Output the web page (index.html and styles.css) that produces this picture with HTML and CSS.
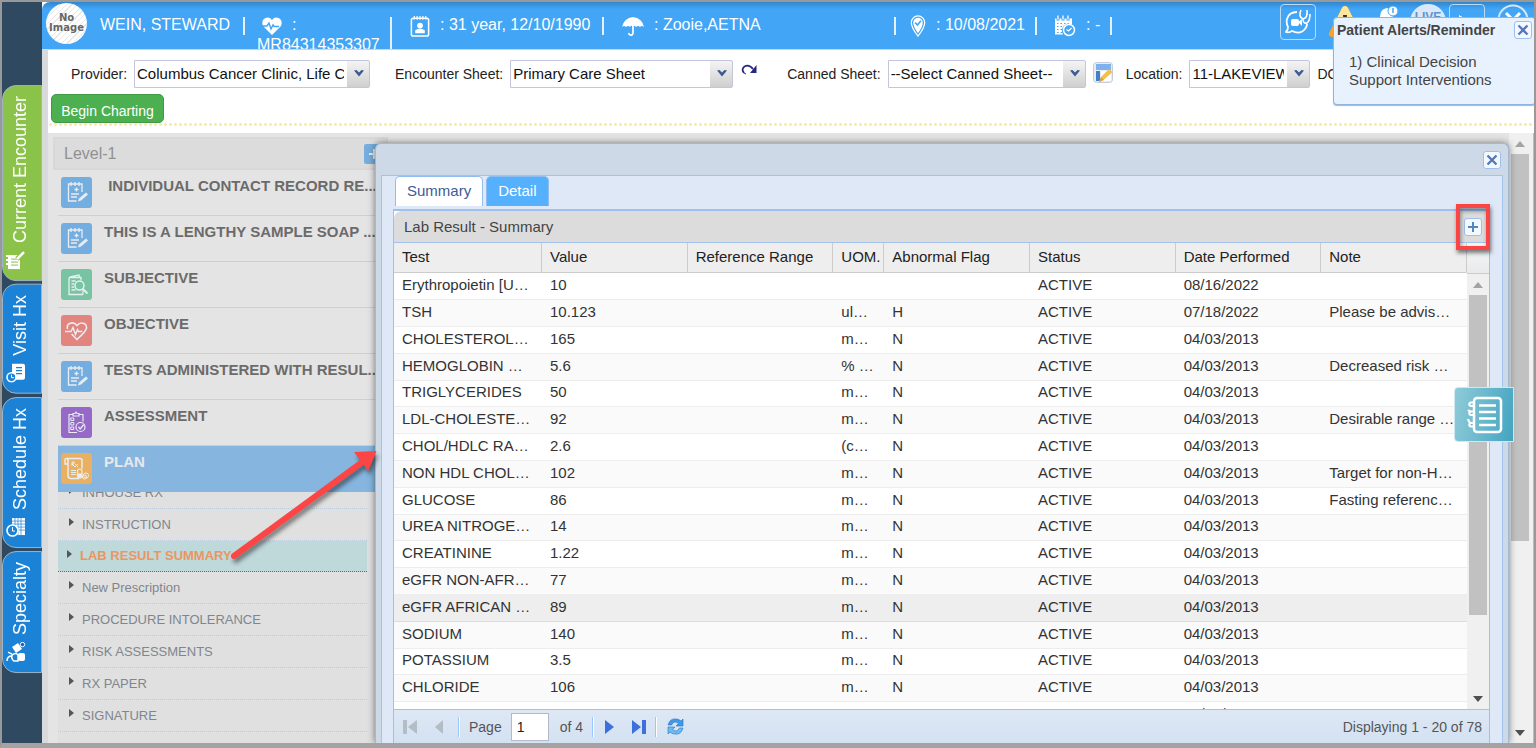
FILE: index.html
```html
<!DOCTYPE html>
<html lang="en">
<head>
<meta charset="utf-8">
<title>Lab Result Summary</title>
<link rel="stylesheet" href="styles.css">
</head>
<body>
<svg class="sprite" aria-hidden="true">
  <symbol id="i-note" viewBox="0 0 31 31">
    <path d="M10 7H7.500v17h8M18 7h3v8" fill="none" stroke="currentColor" stroke-width="1.300"/>
    <path d="M10 5v4M14 5v4M18 5v4M10 7h8M15.500 10.500v4M13.500 12.500h4M10 17h8M10 20h6" fill="none" stroke="currentColor" stroke-width="1.300"/>
    <path d="M17 24.500l1-3 7-6 2 2-7 6z" fill="currentColor"/>
  </symbol>
  <symbol id="i-search" viewBox="0 0 31 31">
    <path d="M8 8.500v17h14M8 8.500h12v3M9 8l9-2 .5 2.500M22 21v4.500M10.500 12h4M10.500 15h2.500M10.500 18h2.500M10.500 21h4" fill="none" stroke="currentColor" stroke-width="1.300"/>
    <circle cx="18.500" cy="16.500" r="4.500" fill="none" stroke="currentColor" stroke-width="1.500"/>
    <path d="M22 20l4.500 4.500" stroke="currentColor" stroke-width="2"/>
  </symbol>
  <symbol id="i-heart" viewBox="0 0 31 31">
    <path d="M6.500 14C5 8.500 12 5.500 16 10.500C20 5.500 27.500 9 25 14.500C23 19 19 21 16 24.500L10.500 19" fill="none" stroke="currentColor" stroke-width="1.600"/>
    <path d="M4 16.500h6l2-4 2.500 7 2-5 1 2h4" fill="none" stroke="currentColor" stroke-width="1.400"/>
  </symbol>
  <symbol id="i-check" viewBox="0 0 31 31">
    <path d="M12 7.500H8v18h8M18.500 7.500H22v7M12 6.500h2l1-1.500 1 1.500h2v2.500h-6z" fill="none" stroke="currentColor" stroke-width="1.200"/>
    <path d="M9.800 11h3v2.500h-3zM9.800 15.500h3V18h-3zM9.800 20h3v2.500h-3z" fill="none" stroke="currentColor"/>
    <circle cx="19.500" cy="20" r="4.500" fill="none" stroke="currentColor" stroke-width="1.200"/>
    <path d="M17.500 20l1.700 2 3.500-4.500" fill="none" stroke="currentColor" stroke-width="1.300"/>
  </symbol>
  <symbol id="i-scroll" viewBox="0 0 31 31">
    <path d="M7 11H4V6.500q0-1 1.500-1H19q2 0 2 2v8M7 6v16.500q0 3 3 3h8M7 8.500q0-3-1.500-3" fill="none" stroke="currentColor" stroke-width="1.500"/>
    <path d="M11 9v4M11 9h2v2h-2l3 3M14 11l3 3M17 11l-3 3M10 17.500h5M10 19.500h5M10 21.500h5" fill="none" stroke="currentColor" stroke-width="1"/>
    <rect x="16.500" y="16" width="4.500" height="9" rx="2.200" fill="none" stroke="currentColor" stroke-width="1.200"/>
    <path d="M16.500 20.500h4.500v3q-2 3-4.500 0z" fill="currentColor"/>
    <circle cx="25" cy="22.500" r="2.500" fill="none" stroke="currentColor"/><circle cx="23.500" cy="24" r="2" fill="none" stroke="currentColor"/>
  </symbol>
  <symbol id="i-chev" viewBox="0 0 12 8"><path d="M1 1l2.500-.5L6 3l2.500-2.500L11 1 6 7z" fill="#3d5a96"/></symbol>
  <symbol id="i-x" viewBox="0 0 12 12"><path d="M1.500 1.500l9 9M10.500 1.500l-9 9" stroke="#5576b8" stroke-width="2.300"/></symbol>
</svg>

<div class="frame">
  <nav class="rail" aria-label="Chart sections">
    <a class="vtab current" href="#encounter">
      <svg viewBox="0 0 20 20"><path d="M2 5h12v14H2z" fill="#fff"/><path d="M0 6h4M0 10h4M0 14h4" stroke="#fff" stroke-width="2"/><path d="M5 9h7M5 12h7M5 15h7" stroke="#8bc34a"/><path d="M11 9l7-7" stroke="#8bc34a" stroke-width="5"/><path d="M11 9l7-7" stroke="#fff" stroke-width="2.500"/></svg>
      <span>Current Encounter</span></a>
    <a class="vtab" href="#visit">
      <svg viewBox="0 0 20 20"><path d="M6 1h11q2 0 2 2v12q0 2-2 2H6z" fill="#fff"/><path d="M10 5h6M10 8h6M10 11h6" stroke="#1c82d6" stroke-width="1.200"/><circle cx="5.500" cy="14.500" r="4.500" fill="#1c82d6" stroke="#fff" stroke-width="1.600"/><path d="M5.500 12v3h2.500" fill="none" stroke="#fff"/></svg>
      <span>Visit Hx</span></a>
    <a class="vtab" href="#schedule">
      <svg viewBox="0 0 20 20"><path d="M6 1h13v17H6z" fill="#fff"/><path d="M9 1v17M12 1v17M15 1v17M6 4h13M6 7h13M6 10h13M6 13h13" stroke="#1c82d6" stroke-width=".7"/><circle cx="6.500" cy="13.500" r="5.500" fill="#1c82d6" stroke="#fff" stroke-width="1.600"/><path d="M6.500 10v4H9" fill="none" stroke="#fff"/></svg>
      <span>Schedule Hx</span></a>
    <a class="vtab" href="#specialty">
      <svg viewBox="0 0 20 20"><path d="M6 5l6-4 4 6-6 4z" fill="#fff"/><circle cx="16.500" cy="2.500" r="2.200" fill="#2c56b0" stroke="#fff"/><rect x="12" y="11" width="7" height="8" rx="2" fill="#fff"/><path d="M6 13q4-3 6 0v6H8q-3-2-2-6z" fill="none" stroke="#fff" stroke-width="1.500"/><path d="M1 19q0-5 5-5M2 10l4 2" fill="none" stroke="#fff" stroke-width="1.500"/></svg>
      <span>Specialty</span></a>
  </nav>

  <div class="main">
    <header class="patient">
      <div class="seg name"><span class="avatar">No<br>Image</span><span>WEIN, STEWARD</span><i class="bar"></i></div>
      <div class="seg mrn">
        <div class="mrn-text">
          <div class="mrn-line"><svg width="22" height="18" viewBox="0 0 22 18"><path d="M11 18L2 9Q0 4 3.500 1.500 8-1 11 3q3-4 7.500-1.500Q22 4 20 9z" fill="#fff"/><path d="M0 9h6l2-3 2 6 2-4 1 1.500h5" fill="none" stroke="#42a5f5" stroke-width="1.400"/></svg><span>:</span></div>
          <div>MR84314353307</div>
        </div><i class="bar tall"></i></div>
      <div class="seg">
        <svg width="20" height="23" viewBox="0 0 20 23"><rect x="1" y="3.500" width="18" height="18.500" rx="2" fill="none" stroke="#fff" stroke-width="1.600"/><path d="M4 1v4M7 1v4M10 1v4M13 1v4M16 1v4" stroke="#fff" stroke-width="1.300"/><circle cx="10" cy="11" r="3" fill="#fff"/><path d="M5 19v-3q5-3 10 0v3z" fill="#fff"/></svg>
        <span>: 31 year, 12/10/1990</span><i class="bar"></i></div>
      <div class="seg last-wide">
        <svg width="22" height="20" viewBox="0 0 22 20"><path d="M0 11Q2 2 11 1q9 1 11 10-2-2-4 0-2-2-4 0-1.500-2-3-1-2-1-3 1-2-2-4 0-2-2-4 0z" fill="#fff"/><path d="M11 9v8q-.5 2.500-2.500 2T7 17" fill="none" stroke="#fff" stroke-width="1.700"/></svg>
        <span>: Zooie,AETNA</span><i class="bar"></i></div>
      <div class="seg pin">
        <svg width="16" height="23" viewBox="0 0 16 23"><path d="M8 22Q1 13 1 8a7 7 0 0 1 14 0q0 5-7 14z" fill="none" stroke="#fff" stroke-width="1.300"/><path d="M8 19Q3 12 3 8a5 5 0 0 1 10 0q0 4-5 11z" fill="#fff"/><path d="M5 8l2.500 2.500L11 6" fill="none" stroke="#42a5f5" stroke-width="1.600"/></svg>
        <span>: 10/08/2021</span><i class="bar"></i></div>
      <div class="seg">
        <svg width="22" height="21" viewBox="0 0 22 21"><path d="M1 3h17v6a7 7 0 0 0-9 10H1z" fill="#fff"/><path d="M4 0v5M9 0v5M14 0v5" stroke="#42a5f5" stroke-width="3"/><path d="M4 0v4M9 0v4M14 0v4" stroke="#fff" stroke-width="1.300"/><path d="M3 8h12M3 11h7M3 14h5M3 17h5" stroke="#42a5f5" stroke-dasharray="1.500 2"/><circle cx="15" cy="14.500" r="5.500" fill="none" stroke="#fff" stroke-width="1.500"/><path d="M12.500 14l2 1.500 3-3" fill="none" stroke="#fff" stroke-width="1.200"/></svg>
        <span>: -</span><i class="bar"></i></div>
      <div class="actions">
        <button class="sq" aria-label="Telehealth"><svg width="26" height="26" viewBox="0 0 26 26"><path d="M12 3Q4 3 2 10q-1 4 1 8 0 3-2 5 3 1 6-1 8 4 13-2 2-2 2-5" fill="none" stroke="#fff" stroke-width="1.800"/><rect x="6" y="10" width="8" height="7" rx="2" fill="#fff"/><path d="M13 13l4-3v7z" fill="#fff"/><path d="M16 1q-3 7 2 9 5-1 4-9M18 10q0 5 4 4 3-2 3-9" fill="none" stroke="#fff" stroke-width="1.600"/></svg></button>
        <button class="plain warn" aria-label="Warnings"><svg width="36" height="36" viewBox="0 0 36 36"><path d="M18 2q2 0 3 2l13 26q0 3-3 3H5q-4-1-3-4L15 4q1-2 3-2z" fill="#ffa21f"/><path d="M18 2q2 0 3 2l9 18H6l9-18q1-2 3-2z" fill="#ffe59a"/><path d="M16 11h4l-1 12h-2z" fill="#333"/></svg></button>
        <button class="plain bell" aria-label="Notifications"><svg width="22" height="28" viewBox="0 0 22 28"><path d="M0 22Q3 18 3 13 3 5 10 4q6 1 6 9 0 5 4 9z" fill="#fff"/><circle cx="16" cy="7" r="5" fill="#fff" stroke="#42a5f5"/><path d="M16 4v5" stroke="#42a5f5" stroke-width="1.500"/></svg></button>
        <button class="live">LIVE</button>
        <button class="sq" aria-label="Play"><svg width="20" height="20" viewBox="0 0 20 20"><path d="M2 3l16 9-16 9z" fill="#fff"/></svg></button>
        <button class="plain closeall" aria-label="Close chart"><svg width="32" height="32" viewBox="0 0 32 32"><circle cx="16" cy="16" r="14.500" fill="none" stroke="#d5e6f6" stroke-width="2"/><path d="M9 9l14 14M23 9L9 23" stroke="#fff" stroke-width="3"/></svg></button>
      </div>
    </header>

    <div class="below">
      <form class="toolbar">
        <div class="fields">
          <label for="provider">Provider:</label>
          <span class="combo w-provider"><select id="provider"><option>Columbus Cancer Clinic, Life Care</option></select><svg><use href="#i-chev"/></svg></span>
          <label class="gap-l" for="sheet">Encounter Sheet:</label>
          <span class="combo w-sheet"><select id="sheet"><option>Primary Care Sheet</option></select><svg><use href="#i-chev"/></svg></span>
          <button type="button" class="plain redo" aria-label="Reload sheet"><svg width="17" height="12" viewBox="0 0 17 12"><path d="M3 9Q0 5 3.500 2.500 8 0 12 5" fill="none" stroke="#27277f" stroke-width="1.800"/><path d="M15.500 1v8H9z" fill="#27277f"/><path d="M3 9l2 1" stroke="#27277f"/></svg></button>
          <label class="gap-l" for="canned">Canned Sheet:</label>
          <span class="combo w-canned"><select id="canned"><option>--Select Canned Sheet--</option></select><svg><use href="#i-chev"/></svg></span>
          <button type="button" class="plain edit" aria-label="Edit canned sheet"><svg width="20" height="21" viewBox="0 0 20 21"><rect x=".5" y=".5" width="19" height="20" rx="3" fill="#e9edf2" stroke="#c3ccd8"/><rect x="3" y="2" width="15" height="6" fill="#7fb2ec"/><path d="M3 9h4v10H3z" fill="#3f7fcb"/><path d="M8 9h10v10H8z" fill="#fff"/><path d="M6 20l2-5 8-8 3.500 3-9 8z" fill="#f2c14d"/><path d="M6 20l2-5 3 3z" fill="#d9a05a"/></svg></button>
          <label for="location">Location:</label>
          <span class="combo w-location"><select id="location"><option>11-LAKEVIEW</option></select><svg><use href="#i-chev"/></svg></span>
          <span>DOS:</span>
        </div>
        <button type="button" class="begin">Begin Charting</button>
      </form>

      <div class="work">
        <aside class="side">
          <h2 class="level">Level-1 <button class="add" aria-label="Add section"><svg width="12" height="12" viewBox="0 0 12 12"><path d="M6 1v10M1 6h10" stroke="#e6ecf2" stroke-width="2"/></svg></button></h2>
          <ul class="sections">
            <li><svg class="tile blue"><use href="#i-note"/></svg><a href="#s1">&nbsp;INDIVIDUAL CONTACT RECORD RE...</a></li>
            <li><svg class="tile blue"><use href="#i-note"/></svg><a href="#s2">THIS IS A LENGTHY SAMPLE SOAP ...</a></li>
            <li><svg class="tile green"><use href="#i-search"/></svg><a href="#s3">SUBJECTIVE</a></li>
            <li><svg class="tile red"><use href="#i-heart"/></svg><a href="#s4">OBJECTIVE</a></li>
            <li><svg class="tile blue"><use href="#i-note"/></svg><a href="#s5">TESTS ADMINISTERED WITH RESUL...</a></li>
            <li><svg class="tile purple"><use href="#i-check"/></svg><a href="#s6">ASSESSMENT</a></li>
            <li class="open"><svg class="tile orange"><use href="#i-scroll"/></svg><a href="#s7">PLAN</a></li>
          </ul>
          <div class="subwrap">
            <ul class="subs">
              <li><a href="#p1">INHOUSE RX</a></li>
              <li><a href="#p2">INSTRUCTION</a></li>
              <li class="on"><a href="#p3">LAB RESULT SUMMARY</a></li>
              <li><a href="#p4">New Prescription</a></li>
              <li><a href="#p5">PROCEDURE INTOLERANCE</a></li>
              <li><a href="#p6">RISK ASSESSMENTS</a></li>
              <li><a href="#p7">RX PAPER</a></li>
              <li><a href="#p8">SIGNATURE</a></li>
            </ul>
          </div>
        </aside>
        <div class="vbar outer"><i class="up"></i><i class="thumb"></i><i class="down"></i></div>

        <section class="win" aria-label="Lab result window">
          <div class="win-head"><button class="tool" aria-label="Close window"><svg width="12" height="12"><use href="#i-x"/></svg></button></div>
          <div class="win-body">
            <div class="tabs" role="tablist">
              <button class="tab active" role="tab" aria-selected="true">Summary</button>
              <button class="tab" role="tab" aria-selected="false">Detail</button>
            </div>
            <div class="panel">
              <div class="panel-head"><span>Lab Result - Summary</span>
                <span class="mark"><button class="tool" aria-label="Add lab result"><svg width="10" height="10" viewBox="0 0 10 10"><path d="M5 0v10M0 5h10" stroke="#4f86c4" stroke-width="2"/></svg></button></span></div>
              <div class="grid">
                <div class="rows">
                  <table>
                    <colgroup><col class="c-test"><col><col><col class="c-uom"><col><col><col><col></colgroup>
                    <thead><tr><th>Test</th><th>Value</th><th>Reference Range</th><th>UOM.</th><th>Abnormal Flag</th><th>Status</th><th>Date Performed</th><th>Note</th></tr></thead>
                    <tbody>
                      <tr><td>Erythropoietin [U…</td><td>10</td><td></td><td></td><td></td><td>ACTIVE</td><td>08/16/2022</td><td></td></tr>
                      <tr><td>TSH</td><td>10.123</td><td></td><td>ul…</td><td>H</td><td>ACTIVE</td><td>07/18/2022</td><td>Please be advis…</td></tr>
                      <tr><td>CHOLESTEROL…</td><td>165</td><td></td><td>m…</td><td>N</td><td>ACTIVE</td><td>04/03/2013</td><td></td></tr>
                      <tr><td>HEMOGLOBIN …</td><td>5.6</td><td></td><td>% …</td><td>N</td><td>ACTIVE</td><td>04/03/2013</td><td>Decreased risk …</td></tr>
                      <tr><td>TRIGLYCERIDES</td><td>50</td><td></td><td>m…</td><td>N</td><td>ACTIVE</td><td>04/03/2013</td><td></td></tr>
                      <tr><td>LDL-CHOLESTE…</td><td>92</td><td></td><td>m…</td><td>N</td><td>ACTIVE</td><td>04/03/2013</td><td>Desirable range …</td></tr>
                      <tr><td>CHOL/HDLC RA…</td><td>2.6</td><td></td><td>(c…</td><td>N</td><td>ACTIVE</td><td>04/03/2013</td><td></td></tr>
                      <tr><td>NON HDL CHOL…</td><td>102</td><td></td><td>m…</td><td>N</td><td>ACTIVE</td><td>04/03/2013</td><td>Target for non-H…</td></tr>
                      <tr><td>GLUCOSE</td><td>86</td><td></td><td>m…</td><td>N</td><td>ACTIVE</td><td>04/03/2013</td><td>Fasting referenc…</td></tr>
                      <tr><td>UREA NITROGE…</td><td>14</td><td></td><td>m…</td><td>N</td><td>ACTIVE</td><td>04/03/2013</td><td></td></tr>
                      <tr><td>CREATININE</td><td>1.22</td><td></td><td>m…</td><td>N</td><td>ACTIVE</td><td>04/03/2013</td><td></td></tr>
                      <tr><td>eGFR NON-AFR…</td><td>77</td><td></td><td>m…</td><td>N</td><td>ACTIVE</td><td>04/03/2013</td><td></td></tr>
                      <tr class="over"><td>eGFR AFRICAN …</td><td>89</td><td></td><td>m…</td><td>N</td><td>ACTIVE</td><td>04/03/2013</td><td></td></tr>
                      <tr><td>SODIUM</td><td>140</td><td></td><td>m…</td><td>N</td><td>ACTIVE</td><td>04/03/2013</td><td></td></tr>
                      <tr><td>POTASSIUM</td><td>3.5</td><td></td><td>m…</td><td>N</td><td>ACTIVE</td><td>04/03/2013</td><td></td></tr>
                      <tr><td>CHLORIDE</td><td>106</td><td></td><td>m…</td><td>N</td><td>ACTIVE</td><td>04/03/2013</td><td></td></tr>
                      <tr><td>CARBON DIOXI…</td><td>20</td><td></td><td>m…</td><td>N</td><td>ACTIVE</td><td>04/03/2013</td><td></td></tr>
                    </tbody>
                  </table>
                </div>
                <div class="gutter"><div class="vbar"><i class="up"></i><i class="thumb"></i><i class="down"></i></div></div>
              </div>
              <div class="pager">
                <button class="plain" aria-label="First page" disabled><svg width="14" height="16" viewBox="0 0 14 16"><path d="M0 1h4v14H0zM14 1v14L5 8z" fill="#b4bcc6"/></svg></button>
                <button class="plain prev" aria-label="Previous page" disabled><svg width="8" height="14" viewBox="0 0 8 14"><path d="M8 0v14L0 7z" fill="#b4bcc6"/></svg></button>
                <i class="sep"></i>
                <label for="page">Page</label>
                <input id="page" type="text" value="1">
                <span class="total">of 4</span>
                <i class="sep"></i>
                <button class="plain next" aria-label="Next page"><svg width="9" height="16" viewBox="0 0 9 16"><path d="M0 1v14l9-7z" fill="#3b70dd"/></svg></button>
                <button class="plain last" aria-label="Last page"><svg width="14" height="16" viewBox="0 0 14 16"><path d="M10 1h4v14h-4zM0 1v14l9-7z" fill="#3b70dd"/></svg></button>
                <i class="sep"></i>
                <button class="plain" aria-label="Refresh"><svg width="19" height="19" viewBox="0 0 19 19"><path d="M2 8Q4 1 10 2q3 0 5 2l2-2v7h-7l2.500-2.500Q8 3 5.500 8z" fill="#3f9be8" stroke="#2b6fc0" stroke-width=".6"/><path d="M17 11q-2 7-8 6-3 0-5-2l-2 2v-7h7l-2.500 2.500q4.500 3.500 7-1.500z" fill="#6bbcf5" stroke="#2b6fc0" stroke-width=".6"/></svg></button>
                <span class="count">Displaying 1 - 20 of 78</span>
              </div>
            </div>
          </div>
        </section>
      </div>
    </div>
  </div>

  <svg class="arrow" width="160" height="126" viewBox="0 0 160 126" aria-hidden="true"><path d="M9 113L136 20" stroke="#fc4646" stroke-width="6" stroke-linecap="round"/><path d="M150 9L143 26 131 10z" fill="#fc4646" stroke="#fc4646" stroke-width="2"/></svg>

  <button class="notes" aria-label="Notes"><svg width="38" height="38" viewBox="0 0 38 38"><rect x="9" y="2" width="27" height="34" rx="3" fill="none" stroke="#fff" stroke-width="2.500"/><path d="M14 9.500h17M14 16h17M14 22.500h17M14 29h17" stroke="#fff" stroke-width="2.500"/><path d="M9 6.500H5.500q-2.500 1.500 0 3.500H9M9 15.500H5.500q-2.500 1.500 0 3.500H9M9 27H5.500q-2.500 1.500 0 3.500H9M3 14q1 1 3 1.500M3 23q1 4 3 4" fill="none" stroke="#fff" stroke-width="2.200"/></svg></button>

  <aside class="alerts" aria-label="Patient alerts">
    <div class="alerts-head"><strong>Patient Alerts/Reminder</strong><button class="tool" aria-label="Close alerts"><svg width="12" height="12"><use href="#i-x"/></svg></button></div>
    <p>1) Clinical Decision<br>Support Interventions</p>
  </aside>
</div>
</body>
</html>
```
FILE: styles.css
```css
* { box-sizing: border-box; }
body { margin: 0; font: 14px/18px "Liberation Sans", Arial, sans-serif; color: #333; }
button, input, select { font: inherit; color: inherit; margin: 0; }
button { padding: 0; cursor: pointer; }
a { color: inherit; text-decoration: none; }
ul { list-style: none; margin: 0; padding: 0; }
svg { display: block; flex: none; }
.sprite { position: absolute; width: 0; height: 0; }
.plain { background: none; border: 0; display: flex; align-items: center; justify-content: center; }

.frame { position: relative; height: 100vh; display: flex; overflow: hidden; border: 2px solid #999; border-bottom: 5px solid #a3a3a3; }

/* left rail */
.rail { width: 40px; flex: none; background: #2f4a60; padding-top: 83px; display: flex; flex-direction: column; gap: 3px; }
.vtab { writing-mode: vertical-rl; transform: rotate(180deg); display: flex; align-items: center; gap: 7px; padding: 10px 0 10px 4px; color: #fff; font-size: 18px; line-height: 22px; background: #1c82d6; border: 1px solid #9fb4c4; border-radius: 0 14px 14px 0; justify-content: flex-start; }
.vtab svg { width: 20px; height: 20px; margin-left: 7px; transform: rotate(180deg); }
.vtab.current { background: #8bc34a; }

.main { flex: 1; min-width: 0; display: flex; flex-direction: column; }

/* patient banner */
.patient { height: 47px; flex: none; display: grid; grid-template-columns: 200px 150px 212px 1fr 140px 72px 426px; overflow: hidden; color: #fff; font-size: 16px; line-height: 20px; white-space: nowrap; background: linear-gradient(#2f86cf, #42a5f5 7px); border-radius: 8px 0 0 0; }
.seg { display: flex; align-items: flex-start; padding: 13px 0 0 18px; gap: 10px; min-width: 0; }
.seg svg { height: 22px; }
.seg.name { padding-left: 4px; gap: 13px; }
.seg.pin { padding-left: 14px; }
.seg.mrn { padding-left: 15px; gap: 0; }
.avatar { flex: none; width: 41px; height: 41px; margin-top: -12px; border-radius: 50%; color: #666; font: bold 10px/10px "DejaVu Sans", sans-serif; text-align: center; padding-top: 10px; background: repeating-linear-gradient(135deg, #fff 0 3px, #e8e8e8 3px 4px); }
.bar { flex: none; width: 2px; height: 18px; margin: 2px 0 0 auto; background: #e8f1fa; }
.bar.tall { height: 34px; }
.mrn-line { display: flex; gap: 9px; padding-left: 4px; }
.seg .mrn-line svg { height: 18px; margin-top: 2px; }
.actions { display: flex; align-items: flex-start; justify-content: flex-end; padding: 2px 5px 0 0; }
.sq { width: 36px; height: 36px; background: none; border: 1px solid #b8dbfa; border-radius: 4px; display: flex; align-items: center; justify-content: center; }
.warn { margin: 0 14px 0 11px; }
.bell { margin-right: 11px; }
.live { width: 36px; height: 36px; border: 0; border-radius: 50%; background: #d9e8f8; color: #5f93cc; font-size: 12px; font-weight: bold; line-height: 12px; padding-bottom: 11px; margin-right: 3px; }
.closeall { margin-left: 12px; }

/* form bar */
.below { flex: 1; min-height: 0; display: flex; flex-direction: column; border-left: 6px solid #d8dadc; }
.toolbar { height: 84px; flex: none; padding-top: 10px; background: #fff; border-top: 1px solid #b9dcfa; }
.fields { display: flex; align-items: center; gap: 7px; padding-left: 23px; height: 28px; white-space: nowrap; overflow: hidden; color: #222; }
.gap-l { margin-left: 18px; }
.combo { position: relative; flex: none; height: 28px; }
.combo select { width: 100%; height: 28px; padding: 0 25px 0 2px; appearance: none; background: linear-gradient(#f4f4f4, #cfcfcf) right / 22px 100% no-repeat #fff; border: 1px solid #c3c6da; border-radius: 0 2px 2px 0; color: #111; font-size: 15px; }
.combo svg { position: absolute; right: 5px; top: 9px; width: 12px; height: 9px; pointer-events: none; }
.w-provider { width: 236px; }
.w-sheet { width: 223px; }
.w-canned { width: 198px; }
.w-location { width: 121px; }
.redo { padding: 0 4px 8px 1px; }
.edit { padding: 0 6px 4px 0; }
.begin { display: block; margin: 6px 0 0 3px; width: 113px; height: 29px; padding-top: 4px; color: #fff; background: #4caf50; border: 1px solid #43994a; border-radius: 5px; white-space: nowrap; }
.toolbar::after { content: ""; display: block; height: 3px; background: radial-gradient(circle, #fbe9ac 1px, transparent 2px) 0 0 / 5px 3px repeat-x; }

/* work area */
.work { position: relative; flex: 1; min-height: 0; display: flex; justify-content: space-between; background: #e4e4e4; }
.side { width: 340px; padding: 4px 0 0 5px; display: flex; flex-direction: column; overflow: hidden; }
.level { margin: 0; height: 33px; flex: none; display: flex; align-items: center; justify-content: space-between; padding: 0 2px 0 9px; font-size: 16px; font-weight: normal; color: #919191; background: #dcdcdc; border: 2px solid #d8d8d8; }
.add { width: 20px; height: 20px; border: 0; border-radius: 2px; background: #77aedd; display: flex; align-items: center; justify-content: center; }
.sections li { display: flex; gap: 12px; height: 46px; margin-left: 5px; padding: 7px 0 0 3px; border-bottom: 1px solid #cfcfcf; font-size: 15px; font-weight: bold; color: #6b6b6b; white-space: nowrap; overflow: hidden; }
.sections { flex: none; }
.sections .open { background: #86b6df; color: #e6e9ec; border-bottom: 0; }
.tile { width: 31px; height: 31px; border-radius: 3px; color: #e8edf1; }
.blue { background: #74aee0; }
.green { background: #78c3a2; }
.red { background: #e2857f; }
.purple { background: #9668c8; }
.orange { background: #e8b060; }
.subwrap { flex: 1; min-height: 0; margin-left: 5px; display: flex; flex-direction: column; justify-content: flex-end; overflow: hidden; background: #e0e0e0; }
.subs { flex: none; margin: 0 21px 11px 0; }
.subs li { display: flex; align-items: center; gap: 8px; height: 32px; padding-left: 11px; font-size: 13px; color: #7f868f; border-bottom: 1px dotted #bccbdd; }
.subs li::before { content: ""; border: 4px solid transparent; border-left: 5px solid #555; border-right: 0; margin-bottom: 5px; }
.subs .on { height: 31px; color: #eb9660; font-weight: bold; background: #bfd8da; border-bottom-color: #5f6f73; padding-left: 9px; }

/* scroll bars */
.vbar { display: flex; flex-direction: column; align-items: center; width: 22px; padding: 8px 2px 7px; background: #f0f0f0; }
.vbar .thumb { width: 18px; background: #c1c1c1; }
.up { border: 5px solid transparent; border-top: 0; border-bottom: 6px solid #a3a3a3; }
.down { margin-top: auto; border: 5px solid transparent; border-bottom: 0; border-top: 6px solid #505050; }
.vbar .up { margin-bottom: 7px; }
.outer { border-right: 1px solid #a8c0dd; width: 25px; padding-right: 4px; }
.outer .thumb { height: 65%; }

/* result window */
.win { position: absolute; inset: 10px 25px 0 327px; display: flex; flex-direction: column; padding: 0 5px; background: #ced9e7; border: 1px solid #a3b8d2; border-bottom: 0; border-radius: 6px 6px 0 0; box-shadow: 0 0 7px rgba(0,0,0,.5); }
.win-head { height: 31px; flex: none; display: flex; align-items: center; justify-content: flex-end; padding-right: 2px; }
.tool { width: 18px; height: 18px; display: flex; align-items: center; justify-content: center; background: #f3f8ff; border: 1px solid #9fc0ec; border-radius: 3px; }
.win-body { flex: 1; min-height: 0; display: flex; flex-direction: column; background: #dfe8f6; border: 1px solid #a3c3ec; border-bottom: 0; }
.tabs { display: flex; align-items: flex-start; gap: 3px; height: 33px; flex: none; padding-left: 13px; }
.tab { height: 30px; padding: 0 11px 2px; font-size: 15px; color: #fff; background: #55b0fd; border: 1px solid #8fbdf0; border-bottom: 0; border-radius: 5px 5px 0 0; }
.tab.active { color: #3c5c98; background: #fff; }
.panel { flex: 1; min-height: 0; display: flex; flex-direction: column; margin: 0 12px 0 11px; background: #fff; border: 1px solid #9fc0ec; border-top-width: 2px; border-bottom: 0; }
.panel-head { height: 32px; flex: none; display: flex; align-items: center; justify-content: space-between; padding: 0 7px 0 10px; font-size: 15px; color: #444; background: #dcdcdc; border-radius: 8px 0 0 0; border-bottom: 1px solid #a3c3ec; }
.mark { position: relative; }
.mark::after { content: ""; position: absolute; inset: -14px -8px; border: 4px solid #fb4545; box-shadow: 1px 3px 4px rgba(0,0,0,.5), inset 1px 3px 4px rgba(0,0,0,.4); pointer-events: none; }
.grid { flex: 1; min-height: 0; display: flex; overflow: hidden; }
.rows { flex: 1; min-width: 0; overflow: hidden; }
table { width: 100%; table-layout: fixed; border-collapse: separate; border-spacing: 0; font-size: 15px; line-height: 18px; }
.c-test { width: 148px; }
.c-uom { width: 51px; }
th, td { padding: 0 0 0 8px; text-align: left; white-space: nowrap; overflow: hidden; }
th { height: 30px; font-weight: normal; color: #222; background: #eee; border-right: 1px solid #ccc; border-bottom: 1px solid #ccc; padding-bottom: 2px; }
td { height: 27px; color: #333; border-bottom: 1px solid #ededed; padding-bottom: 3px; }
tr:nth-child(5n) td { height: 26px; }
tr:nth-child(even) td { background: #fafafa; }
tr.over td { background: #eee; border-bottom-color: #ddd; }
.gutter { width: 22px; flex: none; display: flex; flex-direction: column; }
.gutter::before { content: ""; height: 30px; flex: none; background: linear-gradient(#f6f6f6, #e8eaec); border-bottom: 1px solid #ccc; }
.gutter .vbar { flex: 1; }
.gutter .thumb { height: 320px; }
.pager { height: 34px; flex: none; display: flex; align-items: center; gap: 9px; padding: 0 7px 0 9px; color: #555; background: linear-gradient(#dee8f5, #d3e1f1); border-top: 1px solid #a3c3ec; white-space: nowrap; }
.sep { width: 2px; height: 20px; background: linear-gradient(90deg, #98c8ff 1px, #fff 1px); }
.pager input { width: 38px; height: 28px; padding: 0 5px; color: #222; border: 1px solid #b5b8c8; background: #fff; }
.prev { margin: 0 6px 0 9px; }
.next { margin: 0 9px 0 2px; }
.total { margin-left: 2px; }
.count { margin-left: auto; }

/* floating items */
.arrow { position: absolute; left: 223px; top: 441px; filter: drop-shadow(2px 4px 2px rgba(0,0,0,.45)); }
.notes { position: absolute; right: 20px; top: 385px; width: 60px; height: 55px; display: flex; align-items: center; justify-content: center; background: linear-gradient(100deg, #8fcbd9, #43a4c0); border: 1px solid #cfe9f0; border-radius: 4px 0 0 4px; }
.alerts { position: absolute; right: -2px; top: 15px; width: 203px; height: 88px; padding: 2px 2px 0 3px; background: #e8f2fe; border: 1px solid #8fb4e2; border-radius: 4px; box-shadow: 0 1px 1px #9bb8dc; color: #444; }
.alerts-head { display: flex; align-items: center; justify-content: space-between; padding-right: 1px; height: 20px; white-space: nowrap; }
.alerts p { margin: 13px 0 0 12px; font-size: 15px; line-height: 18px; white-space: nowrap; }
```
